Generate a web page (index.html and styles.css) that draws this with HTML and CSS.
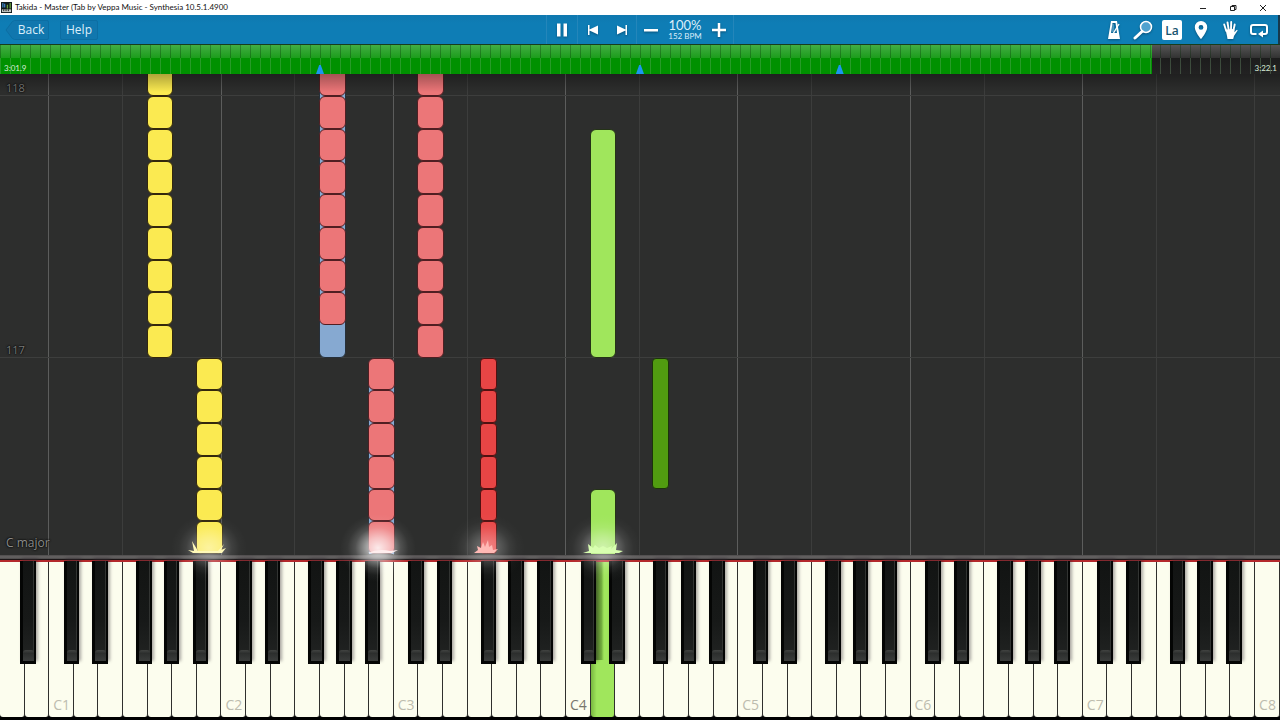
FILE: index.html
```html
<!DOCTYPE html>
<html lang="en">
<head>
  <meta charset="UTF-8">
  <title>Synthesia</title>
  <meta name="viewport" content="width=device-width, initial-scale=1.0">
  <link rel="stylesheet" href="styles.css">
</head>
<body>
  <header class="titlebar">
    <svg class="app-icon" viewBox="0 0 12 12"><rect width="12" height="12" fill="#111b1c"/><path d="M2 1v5M4 2v4" stroke="#3d80c0" stroke-width="1.4"/><path d="M7 3v4M10 1v6" stroke="#6ca43d" stroke-width="1.4"/><path d="M1 8h10v3H1z" fill="#c6c9c6"/><path d="M3 8v2M5.500 8v2M8 8v2" stroke="#111"/></svg>
    <span class="title">Takida - Master (Tab by Veppa Music - Synthesia 10.5.1.4900</span>
    <div class="window-buttons">
      <button aria-label="Minimize"><svg viewBox="0 0 8 8"><path d="M1 4.500h6"/></svg></button>
      <button aria-label="Restore"><svg viewBox="0 0 8 8"><path d="M1.500 2.500h4v4h-4zM3 2.500v-1h4v4H5.500"/></svg></button>
      <button aria-label="Close"><svg viewBox="0 0 8 8"><path d="M1 1l6 6M7 1L1 7"/></svg></button>
    </div>
  </header>

  <nav class="toolbar">
    <div class="left">
      <button class="back"><svg viewBox="0 0 44 20"><path d="M9.500.5H42q1.500 0 1.500 1.500V18q0 1.500-1.500 1.500H9.500Q7 19 5.500 16L1 10l4.500-6Q7 1 9.500.5z"/></svg><span>Back</span></button>
      <button class="help">Help</button>
    </div>
    <div class="transport">
      <div class="cell pause">
        <button aria-label="Pause"><svg viewBox="0 0 16 16"><path d="M3 1.500h3.500v13H3zM9.500 1.500H13v13H9.500z" fill="#fff"/></svg></button>
      </div>
      <div class="cell skip">
        <button aria-label="Previous"><svg viewBox="0 0 16 16"><path d="M3 3h1.500v4.500L13 3.500v9L4.500 8.500V13H3z" fill="#fff"/></svg></button>
        <button aria-label="Next"><svg viewBox="0 0 16 16"><path d="M13 3h-1.500v4.500L3 3.500v9l8.500-4V13H13z" fill="#fff"/></svg></button>
      </div>
      <div class="cell speed">
        <button aria-label="Slower"><svg viewBox="0 0 16 16"><path d="M1 7h14v2.500H1z" fill="#fff"/></svg></button>
        <div class="tempo"><span>100%</span><small>152 BPM</small></div>
        <button aria-label="Faster"><svg viewBox="0 0 16 16"><path d="M1 8h14M8 1v14" stroke="#fff" stroke-width="2.500"/></svg></button>
      </div>
    </div>
    <div class="tools">
      <button aria-label="Metronome"><svg viewBox="0 0 20 20"><path fill-rule="evenodd" d="M7 1h6l3 18H4zM8.500 3L7 13h6l-1.500-10z" fill="#fff"/><path d="M9.500 13L15 4" stroke="#fff" stroke-width="1.400"/><path d="M9 4.500v7" stroke="#fff" stroke-width="1" stroke-dasharray="1 1"/></svg></button>
      <button aria-label="Zoom"><svg viewBox="0 0 20 20"><circle cx="13" cy="7" r="5.500" fill="#4fa2cf" stroke="#fff" stroke-width="1.500"/><path d="M9 11.500L2 18" stroke="#fff" stroke-width="3" stroke-linecap="round"/></svg></button>
      <button class="labels" aria-label="Note labels">La</button>
      <button aria-label="Bookmark"><svg viewBox="0 0 20 20"><path fill-rule="evenodd" d="M10 1a6.200 6.200 0 0 0-6.200 6.200C3.800 12 10 19 10 19s6.200-7 6.200-11.800A6.200 6.200 0 0 0 10 1zm0 4a2.400 2.400 0 1 1 0 4.800A2.400 2.400 0 0 1 10 5z" fill="#fff"/></svg></button>
      <button aria-label="Hands"><svg viewBox="0 0 20 20"><path d="M6.300 11L4.200 4.500M8.700 10L7.500 2.500M11 10l.2-8M13.300 11l1.400-6.500" stroke="#fff" stroke-width="1.900" stroke-linecap="round"/><path d="M5.500 9.500l8.700-.5.300 3.200 1.800-2q1-.8 1.300.3L14 16l-.8 3H7.500L7 16z" fill="#fff"/></svg></button>
      <button aria-label="Loop"><svg viewBox="0 0 20 20"><path d="M7.500 14H4q-2 0-2-2V7q0-2 2-2h12q2 0 2 2v5q0 2-2 2h-2.500" fill="none" stroke="#fff" stroke-width="2"/><path d="M9 14l5-3.500v7z" fill="#fff"/></svg></button>
    </div>
  </nav>

  <section class="timeline">
    <div class="played"></div>
    <div class="ticks"></div>
    <div class="bookmarks" id="bookmarks"></div>
    <span class="time">3:01.9</span>
    <span class="time">3:22.1</span>
  </section>

  <main class="roll">
    <div class="lanes" id="lanes"></div>
    <div id="measures"></div>
    <div class="notes" id="notes"></div>
    <div class="roll-shade"></div>
    <span class="signature">C major</span>
    <div id="flames"></div>
  </main>

  <div class="rail"></div>
  <div class="keyboard" id="keyboard"></div>

  <script src="script.js"></script>
</body>
</html>
```
FILE: styles.css
```css
* {
  box-sizing: border-box;
}
body {
  margin: 0;
  height: 100vh;
  display: flex;
  flex-direction: column;
  overflow: hidden;
  background: #000;
  font-family: "Open Sans", "Noto Sans", sans-serif;
}
button {
  padding: 0;
  border: none;
  background: none;
  color: inherit;
  font-family: inherit;
  cursor: pointer;
}
svg {
  display: block;
}

/* window title */
.titlebar {
  flex: none;
  height: 15px;
  display: flex;
  align-items: center;
  gap: 3px;
  padding: 0 2px 0 1px;
  background: #fff;
  color: #111;
}
.app-icon {
  width: 11px;
  height: 11px;
}
.title {
  font-family: Lato, sans-serif;
  font-size: 8px;
  line-height: 15px;
}
.window-buttons {
  display: flex;
  margin-left: auto;
}
.window-buttons button {
  width: 30px;
  height: 14px;
  display: grid;
  place-items: center;
}
.window-buttons svg {
  width: 8px;
  height: 8px;
  fill: none;
  stroke: #222;
}

/* toolbar */
.toolbar {
  flex: none;
  height: 29px;
  display: grid;
  grid-template-columns: 1fr auto 1fr;
  background: linear-gradient(#0f78af, #0e7db5 30%, #0e7db5);
  color: #fff;
}
.left {
  display: flex;
  align-items: center;
  gap: 11px;
  padding-left: 5px;
}
.left button {
  position: relative;
  height: 20px;
  font-size: 12px;
  line-height: 18px;
  color: #dceefa;
}
.back {
  width: 44px;
  padding-left: 8px;
}
.back svg {
  position: absolute;
  inset: 0;
  fill: #1177ae;
  stroke: #0c6ea3;
}
.back span {
  position: relative;
}
.left .help {
  width: 38px;
  border: 1px solid #0c6ea3;
  border-radius: 2px;
  background: #1177ae;
}
.transport {
  display: flex;
  border-right: 1px solid #2486ba;
}
.cell {
  display: flex;
  align-items: center;
  justify-content: space-around;
  border-left: 1px solid #2486ba;
}
.cell svg {
  width: 16px;
  height: 16px;
  filter: drop-shadow(0 1px 1px #07527a);
}
.pause {
  width: 31px;
}
.skip {
  width: 59px;
}
.speed {
  width: 97px;
  padding: 0 6px;
  justify-content: space-between;
}
.tempo {
  display: flex;
  flex-direction: column;
  align-items: center;
  color: #dceefa;
  font-family: Lato, sans-serif;
}
.tempo span {
  font-size: 13px;
  line-height: 13px;
}
.tempo small {
  font-size: 8px;
  line-height: 8px;
}
.tools {
  display: flex;
  align-items: center;
  justify-content: flex-end;
  gap: 9px;
  padding-right: 9px;
  border-right: 2px solid #17394c;
}
.tools svg {
  width: 20px;
  height: 20px;
  fill: none;
  filter: drop-shadow(0 1px 1px #07527a);
}
.labels {
  width: 20px;
  height: 20px;
  border-radius: 2px;
  background: #fff;
  font-size: 12px;
  font-weight: 600;
  line-height: 21px;
}
.tools .labels {
  color: #17546f;
}

/* song position */
.timeline {
  flex: none;
  position: relative;
  height: 30px;
  display: flex;
  justify-content: space-between;
  align-items: flex-end;
  padding: 0 3px 0 4px;
  border-top: 1px solid #173d1c;
  background: linear-gradient(#555, #323232 45%, #1c1c1c 46%, #222);
}
.played {
  position: absolute;
  inset: 0 10% 0 0;
  background: linear-gradient(#42ad42, #1d9d1d 44%, #009100 46%, #009100);
}
.ticks {
  position: absolute;
  inset: 0;
  background:
    linear-gradient(90deg, rgba(0, 40, 0, 0.3) 1px, transparent 1px) top left / 10px 13px repeat-x,
    linear-gradient(90deg, rgba(130, 180, 130, 0.3) 1px, transparent 1px) bottom left / 10px 16px repeat-x;
}
.bookmarks {
  position: absolute;
  inset: 0;
}
.time {
  position: relative;
  color: #d8ecd8;
  font-family: Lato, sans-serif;
  font-size: 8px;
  line-height: 11px;
}
.bookmark {
  position: absolute;
  bottom: 0;
  width: 8px;
  height: 9px;
  margin-left: -4px;
  background: #1c96f0;
  clip-path: polygon(40% 0, 60% 0, 100% 100%, 0 100%);
}

/* falling notes */
.roll {
  flex: 1;
  position: relative;
  z-index: 2;
  background: #2d2e2d;
}
.lanes {
  position: absolute;
  inset: 0 1px 0 -1px;
  display: grid;
  grid-template-columns: repeat(52, minmax(0, 1fr));
}
.lane {
  border-left: 1px solid #3c3d3c;
}
.lane.octave {
  border-color: #5c5d5c;
}
.lane:first-child {
  border: none;
}
.measure {
  position: absolute;
  left: 0;
  right: 0;
  border-bottom: 1px solid #3d3e3d;
}
.measure span,
.signature {
  position: absolute;
  left: 6px;
  bottom: 0;
  color: #797a79;
  font-size: 11px;
  line-height: 14px;
  text-shadow: 0 0 2px #000, 0 0 2px #000;
}
.roll .signature {
  bottom: 5px;
  font-size: 12px;
  color: #8b8c8b;
}
.notes {
  position: absolute;
  inset: 0 0 1px;
  overflow: hidden;
}
.note {
  position: absolute;
  border: 1px solid #251a10;
  border-radius: 6px;
}
.note.sharp {
  border-radius: 4px;
}
.yellow {
  background: #fbea51;
  border-color: #33270c;
}
.pink {
  background: #ec7678;
  border-color: #501e22;
}
.red {
  background: #e84545;
  border-color: #501010;
}
.blue {
  background: #86a9d1;
  border-color: #26303a;
}
.lime {
  background: #a0e65c;
  border-color: #243316;
}
.green {
  background: #519c10;
  border-color: #1c330a;
}
.roll-shade {
  position: absolute;
  inset: 0 0 auto;
  height: 18px;
  background: linear-gradient(rgba(0, 0, 0, 0.3), transparent);
}
.flame {
  position: absolute;
  bottom: -39px;
  width: 80px;
  height: 80px;
  margin-left: -40px;
  pointer-events: none;
}

/* piano */
.rail {
  flex: none;
  height: 5px;
  border-bottom: 1px solid #1c1516;
  background: linear-gradient(#4c4a4a, #686565 50%, #4a4848);
}
.keyboard {
  flex: none;
  height: 160px;
  display: flex;
  border-top: 2px solid #b4292c;
  border-bottom: 3px solid #000;
  background: #0b0b0b;
}
.key {
  flex: 1;
  position: relative;
  min-width: 0;
}
.white {
  width: 100%;
  height: 100%;
  display: flex;
  align-items: flex-end;
  padding: 0 0 3px 4px;
  border-right: 1px solid #30302d;
  border-radius: 0 0 3px 3px;
  background: #fcfdee;
  color: #bdbcae;
  font-size: 14px;
  line-height: 18px;
}
.white.middle {
  color: #77766d;
}
.white.pressed {
  background: linear-gradient(90deg, #79b840, #a0e65c 25%);
}
.white.pressed::before {
  content: "";
  position: absolute;
  top: 0;
  left: 4px;
  width: 9px;
  height: 98px;
  background: linear-gradient(90deg, #528326, #70a93d 70%, transparent);
}
.black {
  position: absolute;
  top: -1px;
  z-index: 1;
  width: 63%;
  height: 103px;
  border: solid #040504;
  border-width: 0 2px 3px 3px;
  background: linear-gradient(#121413, #171918 60%, #222423);
  box-shadow: 2px -3px 3px rgba(50, 40, 50, 0.4), inset -1px 0 #323432;
}
.black::after {
  content: "";
  position: absolute;
  right: 0;
  bottom: 0;
  left: 0;
  height: 11px;
  border-radius: 3px 3px 0 0;
  background: linear-gradient(#424442, #2c2e2d 30%, #3a3c3b);
}
```
FILE: script.js
```js
const WHITE_KEYS = 52;
const ROLL_STEPS = 14.67;
const LETTERS = "ABCDEFG";
// left edge of each sharp, as a share of the white key before it
const SHARPS = { C: 0.59, D: 0.75, F: 0.53, G: 0.66, A: 0.83 };

const byId = id => document.getElementById(id);
const letterOf = i => LETTERS[i % 7];

function add(parent, tag, className, style) {
  const el = document.createElement(tag);
  el.className = className;
  Object.assign(el.style, style);
  parent.appendChild(el);
  return el;
}

// keyboard
for (let i = 0; i < WHITE_KEYS; i++) {
  const letter = letterOf(i);
  const octave = Math.floor((i + 5) / 7);
  const key = add(byId("keyboard"), "div", "key");
  const white = add(key, "button", "white");
  white.setAttribute("aria-label", letter + octave);
  if (letter === "C") white.textContent = letter + octave;
  if (i === 23) white.classList.add("middle");
  if (i === 24) white.classList.add("pressed");
  if (SHARPS[letter] && i < WHITE_KEYS - 1) {
    const black = add(key, "button", "black", { left: SHARPS[letter] * 100 + "%" });
    black.setAttribute("aria-label", letter + "#" + octave);
  }
}

// lanes start on every C and F
[2, 3, 4, 3, 4, 3, 4, 3, 4, 3, 4, 3, 4, 3, 4, 1].forEach((span, n) => {
  const type = n % 2 ? "lane octave" : "lane";
  add(byId("lanes"), "div", n === 15 ? "lane" : type, { gridColumn: "span " + span });
});

[[117, 6], [118, 14]].forEach(([number, step]) => {
  const line = add(byId("measures"), "div", "measure", { bottom: step / ROLL_STEPS * 100 + "%" });
  add(line, "span", "").textContent = number;
});

[25, 50, 65.6].forEach(left => add(byId("bookmarks"), "div", "bookmark", { left: left + "%" }));

function note(key, start, length, color, sharp) {
  const left = sharp ? key + SHARPS[letterOf(key)] : key;
  add(byId("notes"), "div", "note " + color + (sharp ? " sharp" : ""), {
    left: `calc(${left / WHITE_KEYS * 100}% - 1px)`,
    bottom: start / ROLL_STEPS * 100 + "%",
    width: `calc(${(sharp ? 0.6 : 1) / WHITE_KEYS * 100}% + 2px)`,
    height: length / ROLL_STEPS * 100 + "%"
  });
}

note(13, 6, 10, "blue");
note(15, -1, 7, "blue");
for (let step = 0; step < 6; step++) {
  note(8, step, 1, "yellow");
  note(15, step, 1, "pink");
  note(19, step, 1, "red", true);
}
for (let step = 6; step < 15; step++) {
  note(6, step, 1, "yellow");
  if (step > 6) note(13, step, 1, "pink");
  note(17, step, 1, "pink");
}
note(24, -1, 3, "lime");
note(24, 6, 7, "lime");
note(26, 2, 4, "green", true);

// sparks where a note meets the keys
const SPARKS = [
  { at: 8.5, color: "#fff9b8", glow: 0.45, path: "M24 39l-5-3 6 1-2-10 6 10h20l6-7-3 6 5-2-4 5z" },
  { at: 15.35, color: "#ffeeee", glow: 0.85, path: "M30 39q10-5 22-2l8-1-6 3z" },
  { at: 19.8, color: "#ffb9b5", glow: 0.35, path: "M27 39l4-3-1-4 4 2 2-6 2 5 3-7 1 7 3-2 1 5 5-1-4 4z" },
  { at: 24.5, color: "#d8ffb0", glow: 0.5, path: "M20 39l6-2-1-7 5 4 2-3 4 3 4-2 4 2 5-2-1 3 6-6-1 7 7 1-4 2z" }
];
SPARKS.forEach((spark, n) => {
  const box = add(byId("flames"), "div", "flame", { left: spark.at / WHITE_KEYS * 100 + "%" });
  box.innerHTML = `<svg viewBox="0 0 80 80">
    <defs><radialGradient id="glow${n}">
      <stop offset="0" stop-color="#fff" stop-opacity="${spark.glow}"/>
      <stop offset=".3" stop-color="#fff" stop-opacity="${spark.glow * 0.65}"/>
      <stop offset=".6" stop-color="#fff" stop-opacity="${spark.glow * 0.2}"/>
      <stop offset=".8" stop-color="#fff" stop-opacity="${spark.glow * 0.05}"/>
      <stop offset="1" stop-color="#fff" stop-opacity="0"/>
    </radialGradient></defs>
    <ellipse cx="40" cy="34" rx="38" ry="34" fill="url(#glow${n})"/>
    <path d="${spark.path}" fill="${spark.color}"/>
  </svg>`;
});
```
